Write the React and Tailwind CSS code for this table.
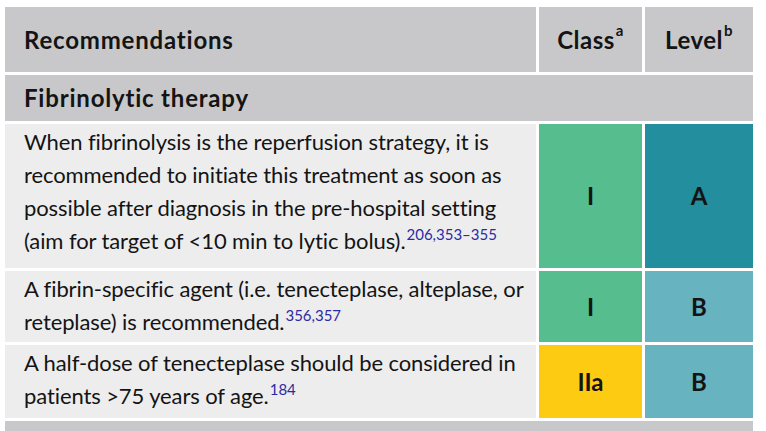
import React from "react";

const rows = [
  {
    lines: [
      "When fibrinolysis is the reperfusion strategy, it is",
      "recommended to initiate this treatment as soon as",
      "possible after diagnosis in the pre-hospital setting",
      "(aim for target of <10 min to lytic bolus).",
    ],
    refs: "206,353–355",
    cls: "I",
    clsBg: "bg-[#56be8e]",
    level: "A",
    levelBg: "bg-[#228e9e]",
    h: "h-[144px]",
  },
  {
    lines: [
      "A fibrin-specific agent (i.e. tenecteplase, alteplase, or",
      "reteplase) is recommended.",
    ],
    refs: "356,357",
    cls: "I",
    clsBg: "bg-[#56be8e]",
    level: "B",
    levelBg: "bg-[#68b3c0]",
    h: "h-[71px]",
  },
  {
    lines: [
      "A half-dose of tenecteplase should be considered in",
      "patients >75 years of age.",
    ],
    refs: "184",
    cls: "IIa",
    clsBg: "bg-[#fccb12]",
    level: "B",
    levelBg: "bg-[#68b3c0]",
    h: "h-[73px]",
  },
];

const App = () => {
  return (
    <div
      className="w-[766px] h-[431px] bg-white pt-[7px] pl-[5px] overflow-hidden text-[#141414]"
      style={{ fontFamily: "Lato, 'Open Sans', sans-serif" }}
    >
      <div className="grid grid-cols-[531px_103px_108px] gap-[3px]">
        {/* Header */}
        <div className="h-[65px] bg-[#c8c8ca] flex items-center pl-[19px] text-[24px] tracking-[0.8px] font-bold">
          Recommendations
        </div>
        <div className="h-[65px] bg-[#c8c8ca] flex items-center justify-center text-[24px] tracking-[0.5px] font-bold">
          Class
          <span className="text-[15px] relative -top-[9px] ml-[1px]">a</span>
        </div>
        <div className="h-[65px] bg-[#c8c8ca] flex items-center justify-center text-[24px] tracking-[0.5px] font-bold">
          Level
          <span className="text-[15px] relative -top-[9px] ml-[1px]">b</span>
        </div>

        {/* Section */}
        <div className="col-span-3 h-[46px] bg-[#c8c8ca] flex items-center pl-[19px] text-[24px] tracking-[0.8px] font-bold">
          Fibrinolytic therapy
        </div>

        {rows.map((r, i) => (
          <React.Fragment key={i}>
            <div className={`${r.h} bg-[#ededed] pl-[19px] pt-[1px] text-[22px] tracking-[-0.1px] leading-[33px] whitespace-nowrap`}>
              {r.lines.map((l, j) => (
                <div key={j}>
                  {l}
                  {j === r.lines.length - 1 && (
                    <span className="text-[15px] tracking-normal text-[#2b2ba3] relative -top-[9px] ml-[1px]">
                      {r.refs}
                    </span>
                  )}
                </div>
              ))}
            </div>
            <div className={`${r.h} ${r.clsBg} flex items-center justify-center text-[24px] font-bold`}>
              {r.cls}
            </div>
            <div className={`${r.h} ${r.levelBg} flex items-center justify-center text-[24px] font-bold`}>
              {r.level}
            </div>
          </React.Fragment>
        ))}

        {/* Bottom bar */}
        <div className="col-span-3 h-[10px] bg-[#c8c8ca]" />
      </div>
    </div>
  );
};

export default App;
